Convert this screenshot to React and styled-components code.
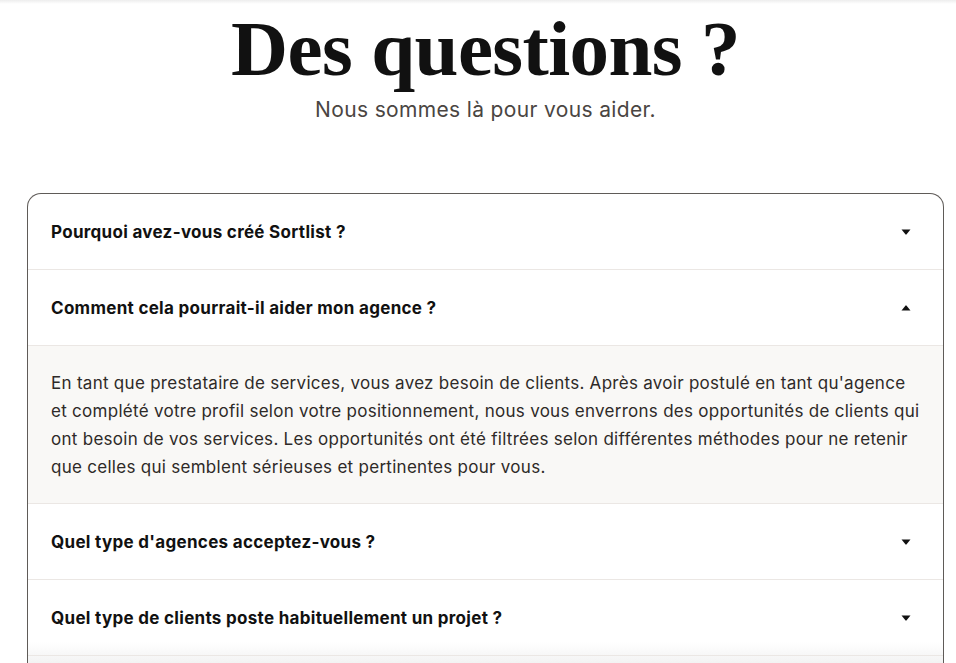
import React, { useState } from "react";
import styled, { createGlobalStyle } from "styled-components";

const faqs = [
  {
    id: "1",
    question: "Pourquoi avez-vous créé Sortlist ?",
    answer: "",
  },
  {
    id: "2",
    question: "Comment cela pourrait-il aider mon agence ?",
    answer:
      "En tant que prestataire de services, vous avez besoin de clients. Après avoir postulé en tant qu'agence et complété votre profil selon votre positionnement, nous vous enverrons des opportunités de clients qui ont besoin de vos services. Les opportunités ont été filtrées selon différentes méthodes pour ne retenir que celles qui semblent sérieuses et pertinentes pour vous.",
  },
  {
    id: "3",
    question: "Quel type d'agences acceptez-vous ?",
    answer: "",
  },
  {
    id: "4",
    question: "Quel type de clients poste habituellement un projet ?",
    answer: "",
  },
];

const Caret = ({ up }) => (
  <CaretSvg width="10" height="6" viewBox="0 0 10 6" $up={up}>
    <path d="M0.5 0.5h9L5.6 5.3a0.8 0.8 0 0 1-1.2 0z" fill="#111" />
  </CaretSvg>
);

const App = () => {
  const [open, setOpen] = useState("2");

  return (
    <>
      <GlobalStyle />
      <Page>
        <Header>
          <Title>Des questions ?</Title>
          <Subtitle>Nous sommes là pour vous aider.</Subtitle>
        </Header>
        <Card>
          {faqs.map((item) => {
            const isOpen = open === item.id;
            return (
              <Item key={item.id}>
                <Question onClick={() => setOpen(isOpen ? null : item.id)}>
                  <span>{item.question}</span>
                  <Caret up={isOpen} />
                </Question>
                {isOpen && item.answer ? <Answer>{item.answer}</Answer> : null}
              </Item>
            );
          })}
        </Card>
      </Page>
    </>
  );
};

export default App;

const GlobalStyle = createGlobalStyle`
  html, body {
    margin: 0;
    padding: 0;
    background: #fff;
    font-family: Inter, "Noto Sans", sans-serif;
    color: #111;
  }
  body {
    overflow: hidden;
  }
`;

const Page = styled.div`
  width: 956px;
  height: 663px;
  overflow: hidden;
  box-sizing: border-box;
  padding: 10px 12px 0 27px;
  background: linear-gradient(to bottom, #ededed 0px, #fff 4px);
`;

const Header = styled.div`
  display: flex;
  flex-direction: column;
  align-items: center;
`;

const Title = styled.h1`
  margin: 0;
  font-family: "Liberation Serif", "DejaVu Serif", serif;
  font-weight: 700;
  font-size: 79px;
  line-height: 78px;
  letter-spacing: -0.6px;
  color: #111;
`;

const Subtitle = styled.p`
  margin: 8px 0 0;
  font-size: 21px;
  line-height: 28px;
  letter-spacing: 0.35px;
  color: #4a4542;
`;

const Card = styled.div`
  margin-top: 69px;
  height: 470px;
  border: 1px solid #5f5b58;
  border-bottom: none;
  border-radius: 14px 14px 0 0;
  overflow: hidden;
  background: linear-gradient(to bottom, #fff 448px, #f2f2f2 470px);
`;

const Item = styled.div`
  border-bottom: 1px solid #ebe7e4;
`;

const Question = styled.div`
  height: 75px;
  display: flex;
  align-items: center;
  justify-content: space-between;
  padding: 0 32px 0 23px;
  font-size: 17px;
  font-weight: 700;
  letter-spacing: 0.3px;
  color: #111;
  cursor: pointer;
`;

const CaretSvg = styled.svg`
  display: block;
  flex-shrink: 0;
  transform: ${(p) => (p.$up ? "rotate(180deg)" : "none")};
`;

const Answer = styled.div`
  background: #f9f8f6;
  border-top: 1px solid #ebe7e4;
  padding: 23px 20px 22px 23px;
  font-size: 17px;
  line-height: 28px;
  letter-spacing: 0.28px;
  color: #2e2a28;
`;
